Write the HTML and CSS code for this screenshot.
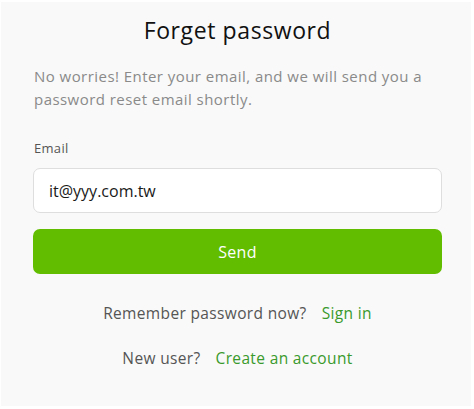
FILE: index.html
```html
<!DOCTYPE html>
<html>
<head>
<meta charset="utf-8">
<link rel="stylesheet" href="styles.css">
</head>
<body>
<div class="panel">
  <h1 class="title">Forget password</h1>
  <p class="desc">No worries! Enter your email, and we will send you a password reset email shortly.</p>
  <label class="label">Email</label>
  <div class="input">it@yyy.com.tw</div>
  <button class="send">Send</button>
  <div class="links">
    <div class="row"><span>Remember password now?</span><a class="link">Sign in</a></div>
    <div class="row"><span>New user?</span><a class="link">Create an account</a></div>
  </div>
</div>
</body>
</html>
```
FILE: styles.css
```css
html, body {
  margin: 0;
  padding: 0;
  background: #ffffff;
}
body {
  padding: 2px 3px 3px 1px;
  font-family: "Open Sans", "Liberation Sans", sans-serif;
}
.panel {
  background: #f9f9f9;
  height: 404px;
  box-sizing: border-box;
  padding: 13px 29px 0 32px;
  display: flex;
  flex-direction: column;
}
.title {
  margin: 0;
  text-align: center;
  font-size: 23px;
  font-weight: 400;
  color: #111;
  line-height: 30px;
  letter-spacing: 0.6px;
}
.desc {
  margin: 20px 0 0 1px;
  font-size: 15px;
  letter-spacing: 0.45px;
  line-height: 23px;
  color: #8a8a8a;
}
.label {
  margin: 28px 0 0 1px;
  font-size: 13px;
  letter-spacing: 0.3px;
  color: #555;
  line-height: 18px;
}
.input {
  margin-top: 11px;
  height: 45px;
  box-sizing: border-box;
  border: 1px solid #dedede;
  border-radius: 7px;
  background: #fff;
  padding: 0 15px;
  display: flex;
  align-items: center;
  font-size: 16px;
  color: #1a1a1a;
}
.send {
  margin-top: 16px;
  height: 45px;
  border: none;
  border-radius: 7px;
  background: #62bd00;
  color: #fff;
  font-family: inherit;
  font-size: 16px;
  letter-spacing: 0.3px;
  padding: 0;
}
.links {
  margin-top: 28px;
  display: flex;
  flex-direction: column;
  gap: 23px;
}
.row {
  display: flex;
  justify-content: center;
  gap: 15px;
  font-size: 15.5px;
  letter-spacing: 0.35px;
  line-height: 22px;
  color: #555;
}
.link {
  color: #3a9a2c;
}
```
